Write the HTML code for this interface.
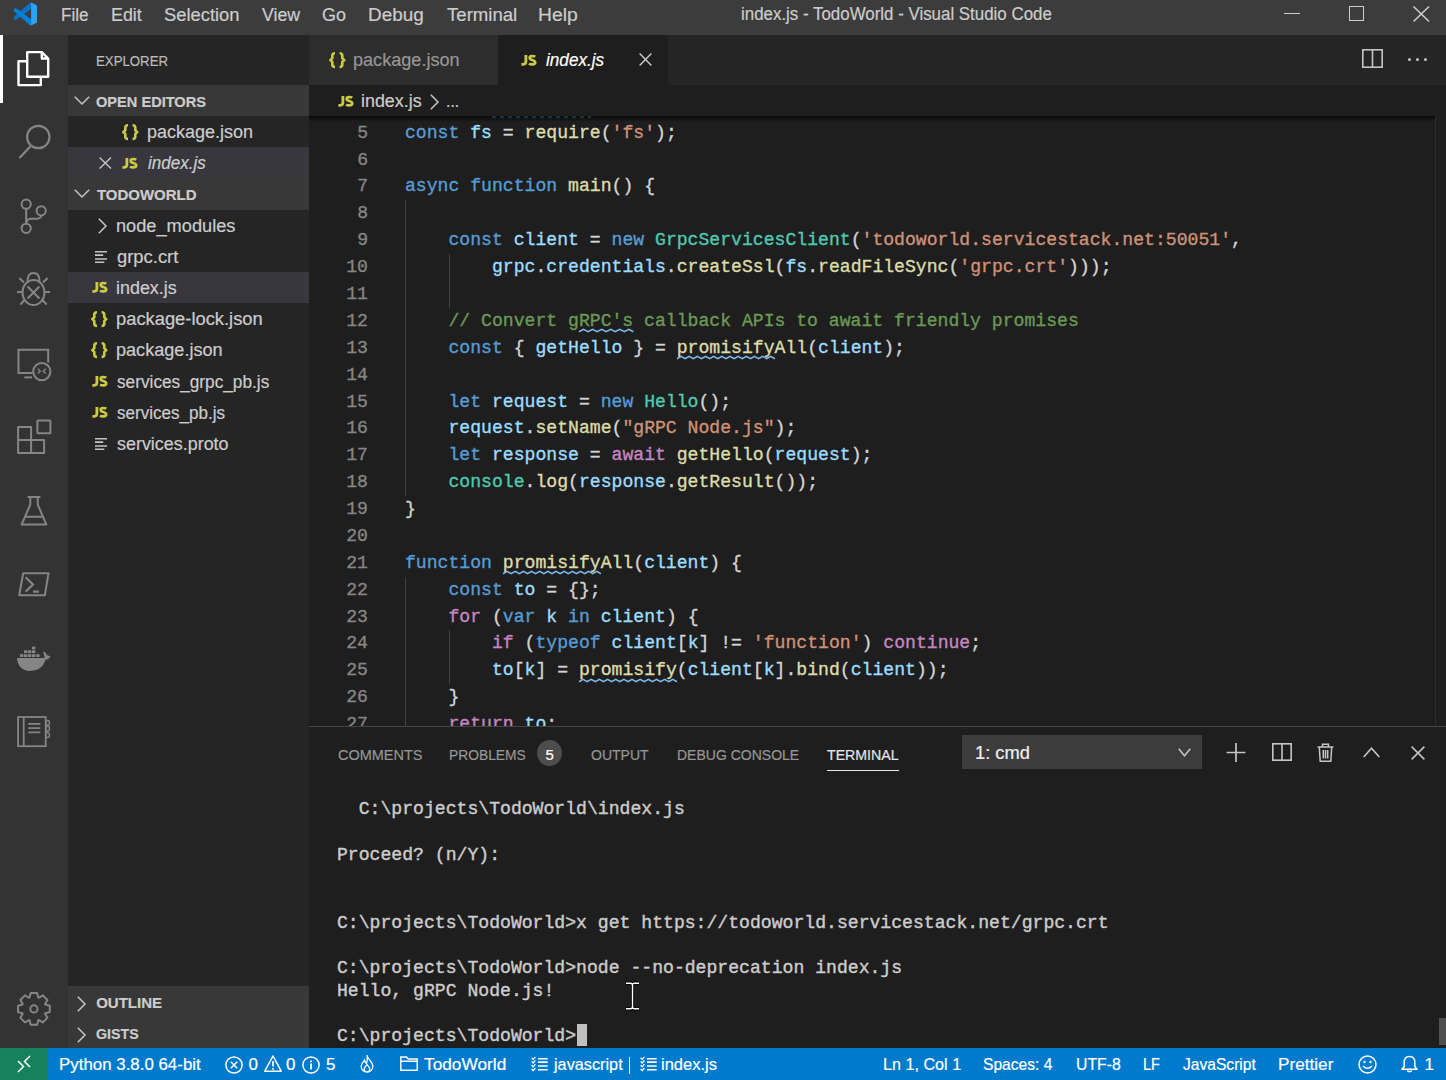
<!DOCTYPE html>
<html><head><meta charset="utf-8">
<style>
*{margin:0;padding:0;box-sizing:border-box}
html,body{width:1446px;height:1080px;overflow:hidden;background:#1e1e1e;font-family:"Liberation Sans",sans-serif;position:relative}
.a{position:absolute}
.t{position:absolute;white-space:pre;line-height:1;-webkit-text-stroke:0.2px currentColor}
svg{position:absolute;overflow:visible}
.k{color:#569cd6}.c{color:#c586c0}.v{color:#9cdcfe}.f{color:#dcdcaa}.s{color:#ce9178}.y{color:#4ec9b0}.cm{color:#6a9955}
</style></head><body>
<style>.ln{-webkit-text-stroke:0.35px currentColor;position:absolute;height:26.88px;line-height:26.88px;white-space:pre;font-family:"Liberation Mono",monospace;font-size:18.13px}</style>
<div class="a" style="left:0px;top:0px;width:1446px;height:35px;background:#3c3c3c;"></div>
<svg style="left:0px;top:0px;" width="50" height="35" viewBox="0 0 50 35"><g transform="translate(13.4 2.6) scale(0.236 0.228)"><path d="M96.4614 10.7962L75.8569 0.875542C73.4719 -0.272773 70.6217 0.211611 68.75 2.08333L1.29858 63.5832C-0.515693 65.2373 -0.513607 68.0937 1.30308 69.7452L6.81272 74.754C8.29793 76.1042 10.5347 76.2036 12.1338 74.9905L93.3609 13.3699C96.0859 11.3026 100 13.2462 100 16.6667V16.4275C100 14.0265 98.6246 11.8378 96.4614 10.7962Z" fill="#0a72c2"/><path d="M96.4614 89.2038L75.8569 99.1245C73.4719 100.273 70.6217 99.7884 68.75 97.9167L1.29858 36.4169C-0.515693 34.7627 -0.513607 31.9063 1.30308 30.2548L6.81272 25.246C8.29793 23.8958 10.5347 23.7964 12.1338 25.0095L93.3609 86.6301C96.0859 88.6974 100 86.7538 100 83.3334V83.5726C100 85.9735 98.6246 88.1622 96.4614 89.2038Z" fill="#0a7fd8"/><path d="M75.8578 99.1263C73.4721 100.274 70.6219 99.7885 68.75 97.9166C71.0564 100.223 75 98.5895 75 95.3278V4.67213C75 1.41039 71.0564 -0.223106 68.75 2.08329C70.6219 0.211402 73.4721 -0.273666 75.8578 0.873633L96.4587 10.7807C98.6234 11.8217 100 14.0112 100 16.4132V83.5871C100 85.9893 98.6234 88.1788 96.4586 89.2198L75.8578 99.1263Z" fill="#2ea1ef"/></g></svg>
<div class="t" style="left:60.55px;top:5.70px;color:#cccccc;font-size:18px;font-family:'Liberation Sans',sans-serif;transform:scaleX(0.9500);transform-origin:0 0;">File</div>
<div class="t" style="left:110.81px;top:5.70px;color:#cccccc;font-size:18px;font-family:'Liberation Sans',sans-serif;transform:scaleX(0.9933);transform-origin:0 0;">Edit</div>
<div class="t" style="left:163.88px;top:5.70px;color:#cccccc;font-size:18px;font-family:'Liberation Sans',sans-serif;transform:scaleX(1.0194);transform-origin:0 0;">Selection</div>
<div class="t" style="left:261.50px;top:5.70px;color:#cccccc;font-size:18px;font-family:'Liberation Sans',sans-serif;transform:scaleX(0.9821);transform-origin:0 0;">View</div>
<div class="t" style="left:321.90px;top:5.70px;color:#cccccc;font-size:18px;font-family:'Liberation Sans',sans-serif;transform:scaleX(0.9957);transform-origin:0 0;">Go</div>
<div class="t" style="left:368.35px;top:5.70px;color:#cccccc;font-size:18px;font-family:'Liberation Sans',sans-serif;transform:scaleX(1.0510);transform-origin:0 0;">Debug</div>
<div class="t" style="left:446.60px;top:5.70px;color:#cccccc;font-size:18px;font-family:'Liberation Sans',sans-serif;transform:scaleX(1.0328);transform-origin:0 0;">Terminal</div>
<div class="t" style="left:537.63px;top:5.70px;color:#cccccc;font-size:18px;font-family:'Liberation Sans',sans-serif;transform:scaleX(1.0722);transform-origin:0 0;">Help</div>
<div class="t" style="left:741.23px;top:5.62px;color:#cccccc;font-size:17.5px;font-family:'Liberation Sans',sans-serif;transform:scaleX(0.9654);transform-origin:0 0;">index.js - TodoWorld - Visual Studio Code</div>
<div class="a" style="left:1284px;top:13px;width:16px;height:1px;background:#cccccc;"></div>
<div class="a" style="left:1349px;top:6px;width:15px;height:15px;background:transparent;border:1.4px solid #cccccc;"></div>
<svg style="left:1413px;top:6px;" width="17" height="16" viewBox="0 0 17 16"><path d="M0.5 0.5 L16 15.5 M16 0.5 L0.5 15.5" stroke="#cccccc" stroke-width="1.6"/></svg>
<div class="a" style="left:0px;top:35px;width:68px;height:1013px;background:#333333;"></div>
<div class="a" style="left:0px;top:35px;width:3px;height:68px;background:#ffffff;"></div>
<svg style="left:0;top:0" width="68" height="1080" viewBox="0 0 68 1080"><path d="M27.2 58.5 V76.8 H48.2 V58.5 L41.8 52.1 H27.2 Z M41.8 52.1 V58.5 H48.2" fill="none" stroke="#fff" stroke-width="2.4" stroke-linejoin="round"/><path d="M27.2 61.2 H18.5 V85.1 H40.8 V76.8" fill="none" stroke="#fff" stroke-width="2.4" stroke-linejoin="round"/></svg>
<svg style="left:0;top:0" width="68" height="1080" viewBox="0 0 68 1080"><circle cx="38.3" cy="137" r="11.2" fill="none" stroke="#858585" stroke-width="2.2"/><path d="M19.5 158 L30.3 146.5" stroke="#858585" stroke-width="2.4"/></svg>
<svg style="left:0;top:0" width="68" height="1080" viewBox="0 0 68 1080"><circle cx="26.2" cy="204.2" r="4.6" fill="none" stroke="#858585" stroke-width="2"/><circle cx="26.2" cy="228.3" r="4.6" fill="none" stroke="#858585" stroke-width="2"/><circle cx="41.2" cy="210.8" r="4.6" fill="none" stroke="#858585" stroke-width="2"/><path d="M26.2 208.8 V223.7 M41.2 215.4 Q41.2 218.5 36 218.8 H31 Q26.5 219 26.2 223.7" fill="none" stroke="#858585" stroke-width="2"/></svg>
<svg style="left:0;top:0" width="68" height="1080" viewBox="0 0 68 1080"><path d="M27.5 281 Q27.5 273 33.5 273 Q39.5 273 39.5 281" fill="none" stroke="#858585" stroke-width="2"/><ellipse cx="33.5" cy="292.5" rx="11" ry="12.6" fill="none" stroke="#858585" stroke-width="2"/><path d="M27.6 286.5 L39.4 298.5 M39.4 286.5 L27.6 298.5" stroke="#858585" stroke-width="2"/><path d="M19.4 278 L24 282.5 M17 291.9 H22.5 M20.4 304.5 L25 299.5 M47.6 278 L43 282.5 M50 291.9 H44.5 M46.6 304.5 L42 299.5" stroke="#858585" stroke-width="2"/></svg>
<svg style="left:0;top:0" width="68" height="1080" viewBox="0 0 68 1080"><path d="M32.5 372.9 H18.5 V349.8 H48.2 V362.5" fill="none" stroke="#858585" stroke-width="2"/><path d="M24.3 377.4 H32" stroke="#858585" stroke-width="2"/><circle cx="41.8" cy="371.6" r="8.6" fill="none" stroke="#858585" stroke-width="2"/><path d="M37.8 368.8 L40.3 371.2 L37.8 373.6 M45.8 368.8 L43.3 371.2 L45.8 373.6" fill="none" stroke="#858585" stroke-width="1.4"/></svg>
<svg style="left:0;top:0" width="68" height="1080" viewBox="0 0 68 1080"><rect x="37.4" y="420.6" width="13" height="12.6" fill="none" stroke="#858585" stroke-width="2" rx="0.5"/><path d="M18.1 427 H31.1 V453 H18.1 Z M18.1 440 H44.1 V453 H31.1" fill="none" stroke="#858585" stroke-width="2" stroke-linejoin="round"/></svg>
<svg style="left:0;top:0" width="68" height="1080" viewBox="0 0 68 1080"><path d="M27.6 497 H40.4 M30.3 497 V504.5 L21.6 524.6 H46.4 L37.7 504.5 V497 M25.2 516.8 H42.8" fill="none" stroke="#858585" stroke-width="2" stroke-linejoin="round"/></svg>
<svg style="left:0;top:0" width="68" height="1080" viewBox="0 0 68 1080"><path d="M23.2 573.3 H48.5 L44.8 595.3 H19.2 Z" fill="none" stroke="#858585" stroke-width="2" stroke-linejoin="round"/><path d="M25.6 577.2 L33 584.5 L25.6 591.8 M33 591.6 H38.9" fill="none" stroke="#858585" stroke-width="2.2"/></svg>
<svg style="left:0;top:0" width="68" height="1080" viewBox="0 0 68 1080"><path d="M16.9 658.1 H44.8 Q43 652 43.6 651.2 Q46.5 652.8 46.8 655 Q49 655.8 50.6 656.5 Q49 659.5 45.5 659.7 Q42 671 29 671 Q18 670 16.9 658.1 Z" fill="#858585"/><rect x="20" y="654.2" width="3.4" height="2.8" fill="#858585"/><rect x="24" y="654.2" width="3.4" height="2.8" fill="#858585"/><rect x="28" y="654.2" width="3.4" height="2.8" fill="#858585"/><rect x="32" y="654.2" width="3.4" height="2.8" fill="#858585"/><rect x="36.2" y="654.2" width="3.4" height="2.8" fill="#858585"/><rect x="24" y="650.3" width="3.4" height="2.8" fill="#858585"/><rect x="28" y="650.3" width="3.4" height="2.8" fill="#858585"/><rect x="32" y="650.3" width="3.4" height="2.8" fill="#858585"/><rect x="32" y="646.6" width="3.4" height="2.8" fill="#858585"/></svg>
<svg style="left:0;top:0" width="68" height="1080" viewBox="0 0 68 1080"><rect x="18.1" y="717" width="27.6" height="29.2" fill="none" stroke="#858585" stroke-width="1.8"/><path d="M23.7 717 V746.2 M28.3 723.8 H40.3 M28.3 728.1 H40.3 M28.3 732.4 H40.3" stroke="#858585" stroke-width="1.8"/><rect x="45.8" y="720.5" width="3.6" height="4.6" rx="1.4" fill="none" stroke="#858585" stroke-width="1.5"/><rect x="45.8" y="726.3" width="3.6" height="4.6" rx="1.4" fill="none" stroke="#858585" stroke-width="1.5"/><rect x="45.8" y="732.8" width="3.6" height="4.6" rx="1.4" fill="none" stroke="#858585" stroke-width="1.5"/></svg>
<svg style="left:0;top:0" width="68" height="1080" viewBox="0 0 68 1080"><path d="M49.78 1005.68 L49.78 1012.12 L45.27 1013.31 L45.06 1013.82 L47.40 1017.85 L42.85 1022.40 L38.82 1020.06 L38.31 1020.27 L37.12 1024.78 L30.68 1024.78 L29.49 1020.27 L28.98 1020.06 L24.95 1022.40 L20.40 1017.85 L22.74 1013.82 L22.53 1013.31 L18.02 1012.12 L18.02 1005.68 L22.53 1004.49 L22.74 1003.98 L20.40 999.95 L24.95 995.40 L28.98 997.74 L29.49 997.53 L30.68 993.02 L37.12 993.02 L38.31 997.53 L38.82 997.74 L42.85 995.40 L47.40 999.95 L45.06 1003.98 L45.27 1004.49 Z" fill="none" stroke="#858585" stroke-width="2" stroke-linejoin="round"/><circle cx="33.9" cy="1008.9" r="3.6" fill="none" stroke="#858585" stroke-width="2"/></svg>
<div class="a" style="left:68px;top:35px;width:241px;height:1013px;background:#252526;"></div>
<div class="t" style="left:95.52px;top:52.95px;color:#bbbbbb;font-size:15px;font-family:'Liberation Sans',sans-serif;transform:scaleX(0.8812);transform-origin:0 0;">EXPLORER</div>
<div class="a" style="left:68px;top:85px;width:241px;height:31px;background:#383838;"></div>
<svg style="left:73.8px;top:95.6px;" width="16" height="9" viewBox="0 0 16 9"><path d="M0.8 0.8 L8 8 L15.2 0.8" fill="none" stroke="#c5c5c5" stroke-width="1.5"/></svg>
<div class="t" style="left:96.40px;top:93.75px;color:#cccccc;font-size:15px;font-family:'Liberation Sans',sans-serif;font-weight:bold;transform:scaleX(0.9726);transform-origin:0 0;">OPEN EDITORS</div>
<div class="a" style="left:68px;top:147px;width:241px;height:31px;background:#37373d;"></div>
<div class="a" style="left:68px;top:178px;width:241px;height:32px;background:#383838;"></div>
<svg style="left:73.8px;top:189px;" width="16" height="9" viewBox="0 0 16 9"><path d="M0.8 0.8 L8 8 L15.2 0.8" fill="none" stroke="#c5c5c5" stroke-width="1.5"/></svg>
<div class="t" style="left:96.90px;top:187.15px;color:#cccccc;font-size:15px;font-family:'Liberation Sans',sans-serif;font-weight:bold;transform:scaleX(0.9980);transform-origin:0 0;">TODOWORLD</div>
<div class="a" style="left:68px;top:272px;width:241px;height:31px;background:#37373d;"></div>
<svg style="left:121.5px;top:123.6px;" width="17" height="17" viewBox="0 0 17 17"><path d="M6 1.3 Q3.3 1.3 3.3 3.8 V6.3 L1.3 8.1 L3.3 9.9 V12.4 Q3.3 14.9 6 14.9 M10.6 1.3 Q13.3 1.3 13.3 3.8 V6.3 L15.3 8.1 L13.3 9.9 V12.4 Q13.3 14.9 10.6 14.9" fill="none" stroke="#cbcb41" stroke-width="2.6" stroke-linejoin="round"/></svg>
<div class="t" style="left:147.20px;top:123.20px;color:#cccccc;font-size:18px;font-family:'Liberation Sans',sans-serif;transform:scaleX(0.9990);transform-origin:0 0;">package.json</div>
<svg style="left:99px;top:156.5px;" width="13" height="12" viewBox="0 0 13 12"><path d="M0.6 0.6 L12 11.4 M12 0.6 L0.6 11.4" stroke="#c5c5c5" stroke-width="1.4"/></svg>
<svg style="left:122.2px;top:157.6px;" width="16" height="11" viewBox="0 0 16 11"><path d="M4.9 0 V6.6 Q4.9 9.3 2.4 9.3 H0.4" fill="none" stroke="#cbcb41" stroke-width="2.8"/><path d="M14.3 1.7 Q13.1 1 11 1 Q8.7 1 8.7 2.8 Q8.7 4.3 11.3 5 Q14.2 5.8 14.2 7.6 Q14.2 9.4 11.3 9.4 Q9.2 9.4 8 8.6" fill="none" stroke="#cbcb41" stroke-width="2.7"/></svg>
<div class="t" style="left:147.60px;top:154.37px;color:#cccccc;font-size:18px;font-family:'Liberation Sans',sans-serif;font-style:italic;transform:scaleX(0.9459);transform-origin:0 0;">index.js</div>
<svg style="left:97.9px;top:217.7px;" width="9" height="16" viewBox="0 0 9 16"><path d="M0.8 0.8 L8 8 L0.8 15.2" fill="none" stroke="#c5c5c5" stroke-width="1.5"/></svg>
<div class="t" style="left:115.59px;top:216.70px;color:#cccccc;font-size:18px;font-family:'Liberation Sans',sans-serif;transform:scaleX(1.0111);transform-origin:0 0;">node_modules</div>
<svg style="left:95.2px;top:251.07px;" width="14" height="13" viewBox="0 0 14 13"><path d="M0 0.8H12 M0 4.1H8.2 M0 8H12 M0 11.3H9.3" stroke="#c5c5c5" stroke-width="1.6"/></svg>
<div class="t" style="left:116.60px;top:247.87px;color:#cccccc;font-size:18px;font-family:'Liberation Sans',sans-serif;transform:scaleX(1.0217);transform-origin:0 0;">grpc.crt</div>
<svg style="left:91.6px;top:282.14px;" width="16" height="11" viewBox="0 0 16 11"><path d="M4.9 0 V6.6 Q4.9 9.3 2.4 9.3 H0.4" fill="none" stroke="#cbcb41" stroke-width="2.8"/><path d="M14.3 1.7 Q13.1 1 11 1 Q8.7 1 8.7 2.8 Q8.7 4.3 11.3 5 Q14.2 5.8 14.2 7.6 Q14.2 9.4 11.3 9.4 Q9.2 9.4 8 8.6" fill="none" stroke="#cbcb41" stroke-width="2.7"/></svg>
<div class="t" style="left:115.60px;top:279.04px;color:#cccccc;font-size:18px;font-family:'Liberation Sans',sans-serif;transform:scaleX(0.9950);transform-origin:0 0;">index.js</div>
<svg style="left:90.5px;top:310.81px;" width="17" height="17" viewBox="0 0 17 17"><path d="M6 1.3 Q3.3 1.3 3.3 3.8 V6.3 L1.3 8.1 L3.3 9.9 V12.4 Q3.3 14.9 6 14.9 M10.6 1.3 Q13.3 1.3 13.3 3.8 V6.3 L15.3 8.1 L13.3 9.9 V12.4 Q13.3 14.9 10.6 14.9" fill="none" stroke="#cbcb41" stroke-width="2.6" stroke-linejoin="round"/></svg>
<div class="t" style="left:115.58px;top:310.21px;color:#cccccc;font-size:18px;font-family:'Liberation Sans',sans-serif;transform:scaleX(1.0183);transform-origin:0 0;">package-lock.json</div>
<svg style="left:90.5px;top:341.98px;" width="17" height="17" viewBox="0 0 17 17"><path d="M6 1.3 Q3.3 1.3 3.3 3.8 V6.3 L1.3 8.1 L3.3 9.9 V12.4 Q3.3 14.9 6 14.9 M10.6 1.3 Q13.3 1.3 13.3 3.8 V6.3 L15.3 8.1 L13.3 9.9 V12.4 Q13.3 14.9 10.6 14.9" fill="none" stroke="#cbcb41" stroke-width="2.6" stroke-linejoin="round"/></svg>
<div class="t" style="left:115.60px;top:341.38px;color:#cccccc;font-size:18px;font-family:'Liberation Sans',sans-serif;transform:scaleX(1.0048);transform-origin:0 0;">package.json</div>
<svg style="left:91.6px;top:375.65000000000003px;" width="16" height="11" viewBox="0 0 16 11"><path d="M4.9 0 V6.6 Q4.9 9.3 2.4 9.3 H0.4" fill="none" stroke="#cbcb41" stroke-width="2.8"/><path d="M14.3 1.7 Q13.1 1 11 1 Q8.7 1 8.7 2.8 Q8.7 4.3 11.3 5 Q14.2 5.8 14.2 7.6 Q14.2 9.4 11.3 9.4 Q9.2 9.4 8 8.6" fill="none" stroke="#cbcb41" stroke-width="2.7"/></svg>
<div class="t" style="left:116.60px;top:372.55px;color:#cccccc;font-size:18px;font-family:'Liberation Sans',sans-serif;transform:scaleX(0.9572);transform-origin:0 0;">services_grpc_pb.js</div>
<svg style="left:91.6px;top:406.82000000000005px;" width="16" height="11" viewBox="0 0 16 11"><path d="M4.9 0 V6.6 Q4.9 9.3 2.4 9.3 H0.4" fill="none" stroke="#cbcb41" stroke-width="2.8"/><path d="M14.3 1.7 Q13.1 1 11 1 Q8.7 1 8.7 2.8 Q8.7 4.3 11.3 5 Q14.2 5.8 14.2 7.6 Q14.2 9.4 11.3 9.4 Q9.2 9.4 8 8.6" fill="none" stroke="#cbcb41" stroke-width="2.7"/></svg>
<div class="t" style="left:116.60px;top:403.72px;color:#cccccc;font-size:18px;font-family:'Liberation Sans',sans-serif;transform:scaleX(0.9482);transform-origin:0 0;">services_pb.js</div>
<svg style="left:95.2px;top:438.09px;" width="14" height="13" viewBox="0 0 14 13"><path d="M0 0.8H12 M0 4.1H8.2 M0 8H12 M0 11.3H9.3" stroke="#c5c5c5" stroke-width="1.6"/></svg>
<div class="t" style="left:116.60px;top:434.89px;color:#cccccc;font-size:18px;font-family:'Liberation Sans',sans-serif;transform:scaleX(0.9955);transform-origin:0 0;">services.proto</div>
<div class="a" style="left:68px;top:986px;width:241px;height:62px;background:#383838;"></div>
<svg style="left:77px;top:995.5px;" width="9" height="16" viewBox="0 0 9 16"><path d="M0.8 0.8 L8 8 L0.8 15.2" fill="none" stroke="#c5c5c5" stroke-width="1.5"/></svg>
<div class="t" style="left:96.20px;top:995.05px;color:#cccccc;font-size:15px;font-family:'Liberation Sans',sans-serif;font-weight:bold;transform:scaleX(1.0000);transform-origin:0 0;">OUTLINE</div>
<svg style="left:77px;top:1026.6px;" width="9" height="16" viewBox="0 0 9 16"><path d="M0.8 0.8 L8 8 L0.8 15.2" fill="none" stroke="#c5c5c5" stroke-width="1.5"/></svg>
<div class="t" style="left:96.20px;top:1026.15px;color:#cccccc;font-size:15px;font-family:'Liberation Sans',sans-serif;font-weight:bold;transform:scaleX(0.9489);transform-origin:0 0;">GISTS</div>
<div class="a" style="left:309px;top:35px;width:1137px;height:50px;background:#252526;"></div>
<div class="a" style="left:309px;top:35px;width:189px;height:50px;background:#2d2d2d;"></div>
<div class="a" style="left:498px;top:35px;width:170px;height:50px;background:#1e1e1e;"></div>
<svg style="left:328.5px;top:52px;" width="17" height="17" viewBox="0 0 17 17"><path d="M6 1.3 Q3.3 1.3 3.3 3.8 V6.3 L1.3 8.1 L3.3 9.9 V12.4 Q3.3 14.9 6 14.9 M10.6 1.3 Q13.3 1.3 13.3 3.8 V6.3 L15.3 8.1 L13.3 9.9 V12.4 Q13.3 14.9 10.6 14.9" fill="none" stroke="#cbcb41" stroke-width="2.6" stroke-linejoin="round"/></svg>
<div class="t" style="left:353.40px;top:51.30px;color:#969696;font-size:18px;font-family:'Liberation Sans',sans-serif;transform:scaleX(1.0048);transform-origin:0 0;">package.json</div>
<svg style="left:521.2px;top:54.9px;" width="16" height="11" viewBox="0 0 16 11"><path d="M4.9 0 V6.6 Q4.9 9.3 2.4 9.3 H0.4" fill="none" stroke="#cbcb41" stroke-width="2.8"/><path d="M14.3 1.7 Q13.1 1 11 1 Q8.7 1 8.7 2.8 Q8.7 4.3 11.3 5 Q14.2 5.8 14.2 7.6 Q14.2 9.4 11.3 9.4 Q9.2 9.4 8 8.6" fill="none" stroke="#cbcb41" stroke-width="2.7"/></svg>
<div class="t" style="left:545.60px;top:51.10px;color:#ffffff;font-size:18px;font-family:'Liberation Sans',sans-serif;font-style:italic;transform:scaleX(0.9525);transform-origin:0 0;">index.js</div>
<svg style="left:639px;top:53px;" width="13" height="13" viewBox="0 0 13 13"><path d="M0.6 0.6 L12.4 12.4 M12.4 0.6 L0.6 12.4" stroke="#cccccc" stroke-width="1.4"/></svg>
<svg style="left:1362px;top:49px;" width="21" height="19" viewBox="0 0 21 19"><rect x="0.8" y="0.8" width="19.4" height="17.4" fill="none" stroke="#c5c5c5" stroke-width="1.6"/><path d="M10.5 0.8V18.2" stroke="#c5c5c5" stroke-width="1.6"/></svg>
<div class="a" style="left:1408px;top:58px;width:3px;height:3px;background:#c5c5c5;border-radius:1.5px;"></div>
<div class="a" style="left:1416px;top:58px;width:3px;height:3px;background:#c5c5c5;border-radius:1.5px;"></div>
<div class="a" style="left:1424px;top:58px;width:3px;height:3px;background:#c5c5c5;border-radius:1.5px;"></div>
<div class="a" style="left:309px;top:85px;width:1137px;height:31px;background:#1e1e1e;"></div>
<svg style="left:337.7px;top:95.6px;" width="16" height="11" viewBox="0 0 16 11"><path d="M4.9 0 V6.6 Q4.9 9.3 2.4 9.3 H0.4" fill="none" stroke="#cbcb41" stroke-width="2.8"/><path d="M14.3 1.7 Q13.1 1 11 1 Q8.7 1 8.7 2.8 Q8.7 4.3 11.3 5 Q14.2 5.8 14.2 7.6 Q14.2 9.4 11.3 9.4 Q9.2 9.4 8 8.6" fill="none" stroke="#cbcb41" stroke-width="2.7"/></svg>
<div class="t" style="left:361.41px;top:92.00px;color:#cccccc;font-size:18px;font-family:'Liberation Sans',sans-serif;transform:scaleX(0.9933);transform-origin:0 0;">index.js</div>
<svg style="left:430px;top:94px;" width="9" height="16" viewBox="0 0 9 16"><path d="M0.8 0.8 L8 8 L0.8 15.2" fill="none" stroke="#c5c5c5" stroke-width="1.5"/></svg>
<div class="t" style="left:445.82px;top:92.00px;color:#cccccc;font-size:18px;font-family:'Liberation Sans',sans-serif;transform:scaleX(0.8769);transform-origin:0 0;">...</div>
<div class="a" style="left:309px;top:116px;width:1137px;height:610px;background:#1e1e1e;"></div>
<div class="a" style="left:309px;top:116px;width:1126px;height:610px;overflow:hidden"><div class="a" style="left:96.00px;top:84.34px;width:1px;height:295.68px;background:#404040"></div>
<div class="a" style="left:139.52px;top:138.10px;width:1px;height:53.76px;background:#404040"></div>
<div class="a" style="left:96.00px;top:460.66px;width:1px;height:161.28px;background:#404040"></div>
<div class="a" style="left:139.52px;top:514.42px;width:1px;height:53.76px;background:#404040"></div>
<div class="ln" style="top:3.70px;left:0;width:59px;text-align:right;color:#858585">5</div>
<div class="ln" style="top:3.70px;left:96.0px;color:#d4d4d4"><span class="k">const</span> <span class="v">fs</span> = <span class="f">require</span>(<span class="s">'fs'</span>);</div>
<div class="ln" style="top:30.58px;left:0;width:59px;text-align:right;color:#858585">6</div>
<div class="ln" style="top:57.46px;left:0;width:59px;text-align:right;color:#858585">7</div>
<div class="ln" style="top:57.46px;left:96.0px;color:#d4d4d4"><span class="k">async</span> <span class="k">function</span> <span class="f">main</span>() {</div>
<div class="ln" style="top:84.34px;left:0;width:59px;text-align:right;color:#858585">8</div>
<div class="ln" style="top:111.22px;left:0;width:59px;text-align:right;color:#858585">9</div>
<div class="ln" style="top:111.22px;left:96.0px;color:#d4d4d4">    <span class="k">const</span> <span class="v">client</span> = <span class="k">new</span> <span class="y">GrpcServicesClient</span>(<span class="s">'todoworld.servicestack.net:50051'</span>,</div>
<div class="ln" style="top:138.10px;left:0;width:59px;text-align:right;color:#858585">10</div>
<div class="ln" style="top:138.10px;left:96.0px;color:#d4d4d4">        <span class="v">grpc</span>.<span class="v">credentials</span>.<span class="f">createSsl</span>(<span class="v">fs</span>.<span class="f">readFileSync</span>(<span class="s">'grpc.crt'</span>)));</div>
<div class="ln" style="top:164.98px;left:0;width:59px;text-align:right;color:#858585">11</div>
<div class="ln" style="top:191.86px;left:0;width:59px;text-align:right;color:#858585">12</div>
<div class="ln" style="top:191.86px;left:96.0px;color:#d4d4d4">    <span class="cm">// Convert gRPC's callback APIs to await friendly promises</span></div>
<div class="ln" style="top:218.74px;left:0;width:59px;text-align:right;color:#858585">13</div>
<div class="ln" style="top:218.74px;left:96.0px;color:#d4d4d4">    <span class="k">const</span> { <span class="v">getHello</span> } = <span class="f">promisifyAll</span>(<span class="v">client</span>);</div>
<div class="ln" style="top:245.62px;left:0;width:59px;text-align:right;color:#858585">14</div>
<div class="ln" style="top:272.50px;left:0;width:59px;text-align:right;color:#858585">15</div>
<div class="ln" style="top:272.50px;left:96.0px;color:#d4d4d4">    <span class="k">let</span> <span class="v">request</span> = <span class="k">new</span> <span class="y">Hello</span>();</div>
<div class="ln" style="top:299.38px;left:0;width:59px;text-align:right;color:#858585">16</div>
<div class="ln" style="top:299.38px;left:96.0px;color:#d4d4d4">    <span class="v">request</span>.<span class="f">setName</span>(<span class="s">"gRPC Node.js"</span>);</div>
<div class="ln" style="top:326.26px;left:0;width:59px;text-align:right;color:#858585">17</div>
<div class="ln" style="top:326.26px;left:96.0px;color:#d4d4d4">    <span class="k">let</span> <span class="v">response</span> = <span class="c">await</span> <span class="f">getHello</span>(<span class="v">request</span>);</div>
<div class="ln" style="top:353.14px;left:0;width:59px;text-align:right;color:#858585">18</div>
<div class="ln" style="top:353.14px;left:96.0px;color:#d4d4d4">    <span class="y">console</span>.<span class="f">log</span>(<span class="v">response</span>.<span class="f">getResult</span>());</div>
<div class="ln" style="top:380.02px;left:0;width:59px;text-align:right;color:#858585">19</div>
<div class="ln" style="top:380.02px;left:96.0px;color:#d4d4d4">}</div>
<div class="ln" style="top:406.90px;left:0;width:59px;text-align:right;color:#858585">20</div>
<div class="ln" style="top:433.78px;left:0;width:59px;text-align:right;color:#858585">21</div>
<div class="ln" style="top:433.78px;left:96.0px;color:#d4d4d4"><span class="k">function</span> <span class="f">promisifyAll</span>(<span class="v">client</span>) {</div>
<div class="ln" style="top:460.66px;left:0;width:59px;text-align:right;color:#858585">22</div>
<div class="ln" style="top:460.66px;left:96.0px;color:#d4d4d4">    <span class="k">const</span> <span class="v">to</span> = {};</div>
<div class="ln" style="top:487.54px;left:0;width:59px;text-align:right;color:#858585">23</div>
<div class="ln" style="top:487.54px;left:96.0px;color:#d4d4d4">    <span class="c">for</span> (<span class="k">var</span> <span class="v">k</span> <span class="k">in</span> <span class="v">client</span>) {</div>
<div class="ln" style="top:514.42px;left:0;width:59px;text-align:right;color:#858585">24</div>
<div class="ln" style="top:514.42px;left:96.0px;color:#d4d4d4">        <span class="c">if</span> (<span class="k">typeof</span> <span class="v">client</span>[<span class="v">k</span>] != <span class="s">'function'</span>) <span class="c">continue</span>;</div>
<div class="ln" style="top:541.30px;left:0;width:59px;text-align:right;color:#858585">25</div>
<div class="ln" style="top:541.30px;left:96.0px;color:#d4d4d4">        <span class="v">to</span>[<span class="v">k</span>] = <span class="f">promisify</span>(<span class="v">client</span>[<span class="v">k</span>].<span class="f">bind</span>(<span class="v">client</span>));</div>
<div class="ln" style="top:568.18px;left:0;width:59px;text-align:right;color:#858585">26</div>
<div class="ln" style="top:568.18px;left:96.0px;color:#d4d4d4">    }</div>
<div class="ln" style="top:595.06px;left:0;width:59px;text-align:right;color:#858585">27</div>
<div class="ln" style="top:595.06px;left:96.0px;color:#d4d4d4">    <span class="c">return</span> <span class="v">to</span>;</div>
<svg style="left:269.78px;top:213.06px" width="54.40" height="4" viewBox="0 0 54.40 4"><path d="M0 2.7 L4.53 0.4 L9.07 2.7 L13.60 0.4 L18.13 2.7 L22.67 0.4 L27.20 2.7 L31.73 0.4 L36.27 2.7 L40.80 0.4 L45.33 2.7 L49.87 0.4 L54.40 2.7" fill="none" stroke="#7dbcf0" stroke-width="1.6"/></svg>
<svg style="left:367.70px;top:239.94px" width="97.92" height="4" viewBox="0 0 97.92 4"><path d="M0 2.7 L4.08 0.4 L8.16 2.7 L12.24 0.4 L16.32 2.7 L20.40 0.4 L24.48 2.7 L28.56 0.4 L32.64 2.7 L36.72 0.4 L40.80 2.7 L44.88 0.4 L48.96 2.7 L53.04 0.4 L57.12 2.7 L61.20 0.4 L65.28 2.7 L69.36 0.4 L73.44 2.7 L77.52 0.4 L81.60 2.7 L85.68 0.4 L89.76 2.7 L93.84 0.4 L97.92 2.7" fill="none" stroke="#7dbcf0" stroke-width="1.6"/></svg>
<svg style="left:193.62px;top:454.98px" width="97.92" height="4" viewBox="0 0 97.92 4"><path d="M0 2.7 L4.08 0.4 L8.16 2.7 L12.24 0.4 L16.32 2.7 L20.40 0.4 L24.48 2.7 L28.56 0.4 L32.64 2.7 L36.72 0.4 L40.80 2.7 L44.88 0.4 L48.96 2.7 L53.04 0.4 L57.12 2.7 L61.20 0.4 L65.28 2.7 L69.36 0.4 L73.44 2.7 L77.52 0.4 L81.60 2.7 L85.68 0.4 L89.76 2.7 L93.84 0.4 L97.92 2.7" fill="none" stroke="#7dbcf0" stroke-width="1.6"/></svg>
<svg style="left:269.78px;top:562.50px" width="97.92" height="4" viewBox="0 0 97.92 4"><path d="M0 2.7 L4.08 0.4 L8.16 2.7 L12.24 0.4 L16.32 2.7 L20.40 0.4 L24.48 2.7 L28.56 0.4 L32.64 2.7 L36.72 0.4 L40.80 2.7 L44.88 0.4 L48.96 2.7 L53.04 0.4 L57.12 2.7 L61.20 0.4 L65.28 2.7 L69.36 0.4 L73.44 2.7 L77.52 0.4 L81.60 2.7 L85.68 0.4 L89.76 2.7 L93.84 0.4 L97.92 2.7" fill="none" stroke="#7dbcf0" stroke-width="1.6"/></svg>
<div class="a" style="left:183px;top:0px;width:99px;height:1.5px;background:repeating-linear-gradient(90deg,#3d6f9b 0 4px,transparent 4px 8px)"></div></div>
<div class="a" style="left:309px;top:116px;width:1126px;height:6px;background:linear-gradient(#000a,#0000)"></div>
<div class="a" style="left:1435px;top:116px;width:1px;height:610px;background:#2b2b2b;"></div>
<div class="a" style="left:309px;top:726px;width:1137px;height:1px;background:#454545;"></div>
<div class="a" style="left:309px;top:727px;width:1137px;height:321px;background:#1e1e1e;"></div>
<div class="t" style="left:337.50px;top:746.78px;color:#969696;font-size:15.2px;font-family:'Liberation Sans',sans-serif;transform:scaleX(0.9523);transform-origin:0 0;">COMMENTS</div>
<div class="t" style="left:449.39px;top:746.78px;color:#969696;font-size:15.2px;font-family:'Liberation Sans',sans-serif;transform:scaleX(0.9096);transform-origin:0 0;">PROBLEMS</div>
<div class="t" style="left:591.30px;top:746.78px;color:#969696;font-size:15.2px;font-family:'Liberation Sans',sans-serif;transform:scaleX(0.9222);transform-origin:0 0;">OUTPUT</div>
<div class="t" style="left:677.08px;top:746.78px;color:#969696;font-size:15.2px;font-family:'Liberation Sans',sans-serif;transform:scaleX(0.9221);transform-origin:0 0;">DEBUG CONSOLE</div>
<div class="t" style="left:827.40px;top:746.78px;color:#e7e7e7;font-size:15.2px;font-family:'Liberation Sans',sans-serif;transform:scaleX(0.9325);transform-origin:0 0;">TERMINAL</div>
<div class="a" style="left:537px;top:740px;width:25px;height:26px;background:#4d4d4d;border-radius:50%;"></div>
<div class="t" style="left:545.50px;top:747.45px;color:#ffffff;font-size:15px;font-family:'Liberation Sans',sans-serif;">5</div>
<div class="a" style="left:827px;top:770px;width:72px;height:1px;background:#e7e7e7;"></div>
<div class="a" style="left:962px;top:735px;width:240px;height:34px;background:#3c3c3c;"></div>
<div class="t" style="left:974.88px;top:744.30px;color:#f0f0f0;font-size:18px;font-family:'Liberation Sans',sans-serif;transform:scaleX(1.0173);transform-origin:0 0;">1: cmd</div>
<svg style="left:1177.6px;top:748.3px;" width="13" height="9" viewBox="0 0 13 9"><path d="M0.7 0.7 L6.5 7.8 L12.3 0.7" fill="none" stroke="#c5c5c5" stroke-width="1.5"/></svg>
<svg style="left:1225.5px;top:743.4px;" width="20" height="19" viewBox="0 0 20 19"><path d="M10 0V19 M0.5 9.5H19.5" stroke="#c5c5c5" stroke-width="1.7"/></svg>
<svg style="left:1272px;top:743.4px;" width="20" height="18" viewBox="0 0 20 18"><rect x="0.8" y="0.8" width="18.4" height="16.4" fill="none" stroke="#c5c5c5" stroke-width="1.6"/><path d="M10 0.8V17.2" stroke="#c5c5c5" stroke-width="1.6"/></svg>
<svg style="left:1317.3px;top:742.7px;" width="17" height="19" viewBox="0 0 17 19"><path d="M0.5 4H16.5 M5.5 4V1.2H11.5V4 M2.3 4 L3.2 18.2 H13.8 L14.7 4 M6.3 7V15.5 M8.5 7V15.5 M10.7 7V15.5" fill="none" stroke="#c5c5c5" stroke-width="1.5"/></svg>
<svg style="left:1363.4px;top:747.2px;" width="17" height="11" viewBox="0 0 17 11"><path d="M0.7 10 L8.5 1.2 L16.3 10" fill="none" stroke="#c5c5c5" stroke-width="1.6"/></svg>
<svg style="left:1410.6px;top:745.7px;" width="14" height="14" viewBox="0 0 14 14"><path d="M0.6 0.6 L13.4 13.4 M13.4 0.6 L0.6 13.4" stroke="#c5c5c5" stroke-width="1.5"/></svg>
<div class="t" style="left:337.00px;top:800.32px;color:#cccccc;font-size:18.13px;font-family:'Liberation Mono',monospace;-webkit-text-stroke:0.4px #cccccc;">  C:\projects\TodoWorld\index.js</div>
<div class="t" style="left:337.00px;top:845.66px;color:#cccccc;font-size:18.13px;font-family:'Liberation Mono',monospace;-webkit-text-stroke:0.4px #cccccc;">Proceed? (n/Y):</div>
<div class="t" style="left:337.00px;top:913.67px;color:#cccccc;font-size:18.13px;font-family:'Liberation Mono',monospace;-webkit-text-stroke:0.4px #cccccc;">C:\projects\TodoWorld&gt;x get https://todoworld.servicestack.net/grpc.crt</div>
<div class="t" style="left:337.00px;top:959.01px;color:#cccccc;font-size:18.13px;font-family:'Liberation Mono',monospace;-webkit-text-stroke:0.4px #cccccc;">C:\projects\TodoWorld&gt;node --no-deprecation index.js</div>
<div class="t" style="left:337.00px;top:981.68px;color:#cccccc;font-size:18.13px;font-family:'Liberation Mono',monospace;-webkit-text-stroke:0.4px #cccccc;">Hello, gRPC Node.js!</div>
<div class="t" style="left:337.00px;top:1027.02px;color:#cccccc;font-size:18.13px;font-family:'Liberation Mono',monospace;-webkit-text-stroke:0.4px #cccccc;">C:\projects\TodoWorld&gt;</div>
<div class="a" style="left:577px;top:1024px;width:10px;height:22px;background:#c0c0c0;"></div>
<svg style="left:625px;top:982px;" width="15" height="28" viewBox="0 0 15 28"><path d="M1 1.2 H5.5 Q7.5 1.2 7.5 3.2 Q7.5 1.2 9.5 1.2 H14 M7.5 3 V25 M1 26.8 H5.5 Q7.5 26.8 7.5 24.8 Q7.5 26.8 9.5 26.8 H14" fill="none" stroke="#000" stroke-width="3.2"/><path d="M1 1.2 H5.5 Q7.5 1.2 7.5 3.2 Q7.5 1.2 9.5 1.2 H14 M7.5 3 V25 M1 26.8 H5.5 Q7.5 26.8 7.5 24.8 Q7.5 26.8 9.5 26.8 H14" fill="none" stroke="#fff" stroke-width="1.4"/></svg>
<div class="a" style="left:1439px;top:1018px;width:7px;height:27px;background:#4f4f4f;"></div>
<div class="a" style="left:0px;top:1048px;width:1446px;height:32px;background:#007acc;"></div>
<div class="a" style="left:0px;top:1048px;width:48px;height:32px;background:#16825d;"></div>
<svg style="left:17px;top:1055px;" width="14" height="18" viewBox="0 0 14 18"><path d="M1 17 L6.5 11.5 L1 6 M13 1 L7.5 6.5 L13 12" fill="none" stroke="#fff" stroke-width="1.5"/></svg>
<div class="t" style="left:59.01px;top:1055.55px;color:#ffffff;font-size:17px;font-family:'Liberation Sans',sans-serif;transform:scaleX(0.9930);transform-origin:0 0;">Python 3.8.0 64-bit</div>
<svg style="left:225px;top:1055.5px;" width="18" height="18" viewBox="0 0 18 18"><circle cx="9" cy="9" r="8.1" fill="none" stroke="#fff" stroke-width="1.5"/><path d="M5.8 5.8 L12.2 12.2 M12.2 5.8 L5.8 12.2" stroke="#fff" stroke-width="1.5"/></svg>
<div class="t" style="left:248.40px;top:1055.55px;color:#ffffff;font-size:17px;font-family:'Liberation Sans',sans-serif;">0</div>
<svg style="left:263.9px;top:1055px;" width="18" height="17" viewBox="0 0 18 17"><path d="M9 1 L17.2 16.2 H0.8 Z" fill="none" stroke="#fff" stroke-width="1.5" stroke-linejoin="round"/><path d="M9 6V11.5 M9 13V14.8" stroke="#fff" stroke-width="1.7"/></svg>
<div class="t" style="left:286.00px;top:1055.55px;color:#ffffff;font-size:17px;font-family:'Liberation Sans',sans-serif;">0</div>
<svg style="left:301.5px;top:1055.5px;" width="18" height="18" viewBox="0 0 18 18"><circle cx="9" cy="9" r="8.1" fill="none" stroke="#fff" stroke-width="1.5"/><path d="M9 7.5V13.5 M9 4.6V6.2" stroke="#fff" stroke-width="1.8"/></svg>
<div class="t" style="left:325.90px;top:1055.55px;color:#ffffff;font-size:17px;font-family:'Liberation Sans',sans-serif;">5</div>
<svg style="left:360px;top:1054px;" width="14" height="19" viewBox="0 0 14 19"><path d="M7 1 C7 5 12.8 7.5 12.8 12.2 C12.8 15.8 10.2 18 7 18 C3.8 18 1.2 15.8 1.2 12.5 C1.2 9.5 3.5 8 4.5 6 C5 8 5.5 9 6.5 9.5 C7.5 7 7.5 4 7 1 Z M7 18 C5.2 18 4.2 16.6 4.2 15 C4.2 13.2 6 12.2 7 10.5 C8 12.2 9.8 13.2 9.8 15 C9.8 16.6 8.8 18 7 18" fill="none" stroke="#fff" stroke-width="1.3"/></svg>
<svg style="left:400px;top:1056px;" width="18" height="15" viewBox="0 0 18 15"><path d="M0.8 1 H6.5 L8.3 3 H17.2 V14.2 H0.8 Z M0.8 5.2 H17.2" fill="none" stroke="#fff" stroke-width="1.4"/></svg>
<div class="t" style="left:423.90px;top:1055.55px;color:#ffffff;font-size:17px;font-family:'Liberation Sans',sans-serif;transform:scaleX(1.0163);transform-origin:0 0;">TodoWorld</div>
<svg style="left:531px;top:1056px;" width="18" height="16" viewBox="0 0 18 16"><path d="M7 2.7H16.7 M7 6.1H16.7 M7 10H16.7 M7 13.8H16.7" stroke="#fff" stroke-width="1.6"/><path d="M0.6 1.8 L2.2 3.4 L4.4 0.8 M0.6 5.4 L2.2 7 L4.4 4.4 M0.6 9.2 L2.2 10.8 L4.4 8.2 M0.6 13 L2.2 14.6 L4.4 12" fill="none" stroke="#fff" stroke-width="1.3"/></svg>
<div class="t" style="left:554.16px;top:1055.55px;color:#ffffff;font-size:17px;font-family:'Liberation Sans',sans-serif;transform:scaleX(0.9562);transform-origin:0 0;">javascript</div>
<div class="a" style="left:629px;top:1057px;width:1.4px;height:16.5px;background:#ffffff;"></div>
<svg style="left:639.6px;top:1056px;" width="18" height="16" viewBox="0 0 18 16"><path d="M7 2.7H16.7 M7 6.1H16.7 M7 10H16.7 M7 13.8H16.7" stroke="#fff" stroke-width="1.6"/><path d="M0.6 1.8 L2.2 3.4 L4.4 0.8 M0.6 5.4 L2.2 7 L4.4 4.4 M0.6 9.2 L2.2 10.8 L4.4 8.2 M0.6 13 L2.2 14.6 L4.4 12" fill="none" stroke="#fff" stroke-width="1.3"/></svg>
<div class="t" style="left:660.63px;top:1055.55px;color:#ffffff;font-size:17px;font-family:'Liberation Sans',sans-serif;transform:scaleX(0.9719);transform-origin:0 0;">index.js</div>
<div class="t" style="left:882.55px;top:1055.55px;color:#ffffff;font-size:17px;font-family:'Liberation Sans',sans-serif;transform:scaleX(0.9506);transform-origin:0 0;">Ln 1, Col 1</div>
<div class="t" style="left:983.48px;top:1055.55px;color:#ffffff;font-size:17px;font-family:'Liberation Sans',sans-serif;transform:scaleX(0.9187);transform-origin:0 0;">Spaces: 4</div>
<div class="t" style="left:1075.87px;top:1055.55px;color:#ffffff;font-size:17px;font-family:'Liberation Sans',sans-serif;transform:scaleX(0.9298);transform-origin:0 0;">UTF-8</div>
<div class="t" style="left:1142.75px;top:1055.55px;color:#ffffff;font-size:17px;font-family:'Liberation Sans',sans-serif;transform:scaleX(0.8526);transform-origin:0 0;">LF</div>
<div class="t" style="left:1182.90px;top:1055.55px;color:#ffffff;font-size:17px;font-family:'Liberation Sans',sans-serif;transform:scaleX(0.9175);transform-origin:0 0;">JavaScript</div>
<div class="t" style="left:1278.39px;top:1055.55px;color:#ffffff;font-size:17px;font-family:'Liberation Sans',sans-serif;transform:scaleX(1.0111);transform-origin:0 0;">Prettier</div>
<div class="t" style="left:1424.40px;top:1055.55px;color:#ffffff;font-size:17px;font-family:'Liberation Sans',sans-serif;">1</div>
<svg style="left:1357.5px;top:1055px;" width="19" height="19" viewBox="0 0 19 19"><circle cx="9.5" cy="9.5" r="8.5" fill="none" stroke="#fff" stroke-width="1.5"/><circle cx="6.5" cy="7" r="1.2" fill="#fff"/><circle cx="12.5" cy="7" r="1.2" fill="#fff"/><path d="M5 11 Q9.5 15.5 14 11" fill="none" stroke="#fff" stroke-width="1.5"/></svg>
<svg style="left:1401px;top:1055px;" width="17" height="18" viewBox="0 0 17 18"><path d="M8.5 1.5 C4.5 1.5 3.2 4.5 3.2 7.5 V11.5 L1 14.2 H16 L13.8 11.5 V7.5 C13.8 4.5 12.5 1.5 8.5 1.5 Z M6.2 15.5 Q8.5 18 10.8 15.5" fill="none" stroke="#fff" stroke-width="1.5" stroke-linejoin="round"/></svg>
</body></html>
